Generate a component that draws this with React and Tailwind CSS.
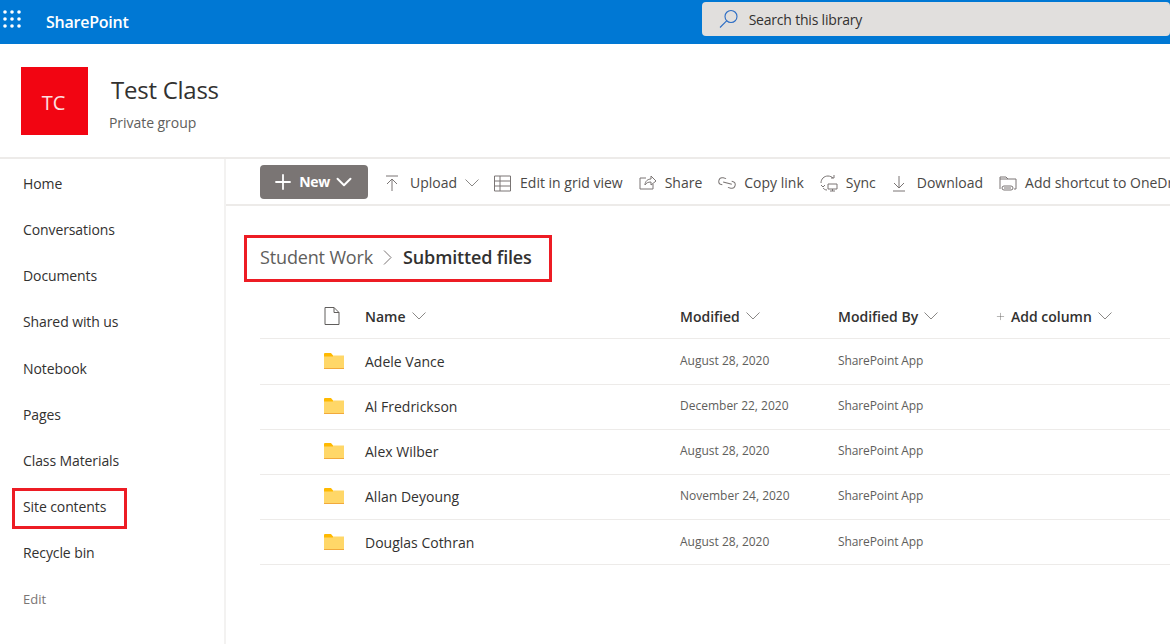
import React from "react";
import { ChevronDown, Plus } from "lucide-react";

const navItems = [
  "Home",
  "Conversations",
  "Documents",
  "Shared with us",
  "Notebook",
  "Pages",
  "Class Materials",
  "Site contents",
  "Recycle bin",
];

const rows = [
  { name: "Adele Vance", date: "August 28, 2020", cls: "h-[46px] pb-[1px]" },
  { name: "Al Fredrickson", date: "December 22, 2020", cls: "h-[45px] pb-[2px]" },
  { name: "Alex Wilber", date: "August 28, 2020", cls: "h-[45px] pb-[2px]" },
  { name: "Allan Deyoung", date: "November 24, 2020", cls: "h-[45px] pb-[2px]" },
  { name: "Douglas Cothran", date: "August 28, 2020", cls: "h-[45px]" },
];

const Waffle = () => (
  <svg width="18" height="18" viewBox="0 0 18 18" fill="#fff">
    {[2, 9, 16].map((y) =>
      [2, 9, 16].map((x) => <circle key={`${x}-${y}`} cx={x} cy={y} r="1.8" />)
    )}
  </svg>
);

const Icon = ({ children }) => (
  <svg width="20" height="20" viewBox="0 0 20 20" fill="none" stroke="#7a7574" strokeWidth="1" className="shrink-0">
    {children}
  </svg>
);

const Chev = ({ className = "" }) => (
  <svg width="14" height="8" viewBox="0 0 14 8" fill="none" stroke="#8a8886" strokeWidth="1" className={`shrink-0 ${className}`}>
    <path d="M.5.5 7 7l6.500-6.500" />
  </svg>
);

const Folder = () => (
  <svg width="20" height="16" viewBox="0 0 20 16">
    <path d="M0 2.500h20V16H0z" fill="#ffd768" />
    <path d="M0 1a1 1 0 0 1 1-1h6l2 2.500v1H0z" fill="#ffb900" />
    <path d="M0 15h20v1H0z" fill="#f2a93b" />
  </svg>
);

const Cmd = ({ icon, label, className = "" }) => (
  <div className={`flex shrink-0 items-center gap-[7px] text-[14px] text-[#4a4846] ${className}`}>
    {icon}
    <span>{label}</span>
  </div>
);

export default function App() {
  return (
    <div className="h-[644px] w-[1170px] overflow-hidden bg-white font-['Open_Sans',sans-serif] text-[#323130]">
      <div className="flex h-11 items-center bg-[#0078d4]">
        <div className="ml-[3px] mb-[6px]">
          <Waffle />
        </div>
        <span className="ml-[25px] text-[16px] font-semibold tracking-[-0.23px] text-white">SharePoint</span>
        <div className="ml-[573px] mb-[6px] flex h-[34px] flex-1 items-center rounded-sm bg-[#e1dfdd] pl-[17px]">
          <svg width="20" height="20" viewBox="0 0 20 20" fill="none" stroke="#2b6cc4" strokeWidth="1.1">
            <circle cx="12" cy="7.500" r="6" />
            <path d="M7.600 11.800 1 18.500" />
          </svg>
          <span className="ml-[10px] text-[14px] tracking-[-0.2px]">Search this library</span>
        </div>
      </div>

      <div className="flex h-[115px] items-center border-b-2 border-[#edebe9] pb-[2px] pl-[21px]">
        <div className="mt-[3px] flex h-[68px] w-[67px] items-center justify-center bg-[#f20512] pr-[2px] pt-[4px] text-[20px] text-[#fde0e0]">
          TC
        </div>
        <div className="ml-[21px] mt-[7px]">
          <div className="ml-[2px] text-[24px] font-medium leading-[32px] tracking-[-0.25px]">Test Class</div>
          <div className="mt-[7px] text-[14px] leading-[20px] tracking-[-0.05px] text-[#605e5c]">Private group</div>
        </div>
      </div>

      <div className="flex h-[485px]">
        <nav className="flex w-[226px] shrink-0 flex-col border-r-2 border-[#f3f2f1] pl-[23px] pt-[1.6px]">
          {navItems.map((item) => (
            <div key={item} className="relative flex h-[46.11px] items-center text-[14px] tracking-[-0.1px]">
              {item}
              {item === "Site contents" && (
                <div className="absolute left-[-11px] top-[4.2px] h-[41px] w-[115px] border-[3px] border-[#ed1c24]" />
              )}
            </div>
          ))}
          <div className="flex h-[46px] items-center pt-[2px] text-[13px] text-[#7a7574]">Edit</div>
        </nav>

        <main className="min-w-0 flex-1">
          <div className="flex h-[47px] items-center whitespace-nowrap border-b-2 border-[#edebe9] pl-[34px] pt-[2px]">
            <div className="mt-[-2px] flex h-[34px] w-[108px] shrink-0 items-center justify-center rounded-sm bg-[#7a7574] text-[14px] font-bold tracking-[-0.3px] text-white">
              <Plus size={24} strokeWidth={1.8} />
              <span className="ml-[4px]">New</span>
              <ChevronDown size={26} strokeWidth={1.8} className="ml-[1px]" />
            </div>
            <Cmd
              className="ml-[15px]"
              label="Upload"
              icon={
                <Icon>
                  <path d="M3 3h12M9 18V6M4 11l5-5 5 5" />
                </Icon>
              }
            />
            <Chev className="ml-[8px]" />
            <Cmd
              className="ml-[14px]"
              label="Edit in grid view"
              icon={
                <Icon>
                  <path d="M1.500 3h16v15h-16zM1.500 8h16M1.500 13h16M7 3v15" />
                </Icon>
              }
            />
            <Cmd
              className="ml-[15px]"
              label="Share"
              icon={
                <Icon>
                  <path d="M8 5H2v11h13v-5M7 12c0-4 3-6 6-6V3l5 5-5 4V9c-3 0-5 1-6 3z" />
                </Icon>
              }
            />
            <Cmd
              className="ml-[15px]"
              label="Copy link"
              icon={
                <Icon>
                  <path d="M8 6H5a3.500 3.500 0 0 0 0 7h1M6 10h9M12 14h3a3.500 3.500 0 0 0 0-7h-1" transform="rotate(15 10 10)" />
                </Icon>
              }
            />
            <Cmd
              className="ml-[15px]"
              label="Sync"
              icon={
                <Icon>
                  <path d="M2 10c0-4 3-7 7-7 2 0 4 1 5 2M15 2v3h-3M2 12l2 2 2-2M8 17c-2 0-3-1-4-2M9 11h9v5H9zM13.500 16v2M11 18h5" />
                </Icon>
              }
            />
            <Cmd
              className="ml-[14px]"
              label="Download"
              icon={
                <Icon>
                  <path d="M3 18h12M9 3v12M4 10l5 5 5-5" />
                </Icon>
              }
            />
            <Cmd
              className="ml-[15px]"
              label="Add shortcut to OneDrive"
              icon={
                <Icon>
                  <path d="M2 16V4h6l2 2h8v10h-2M2 6h8M6 13h7a2 2 0 0 1 0 4H6a2 2 0 0 1 0-4zM6 15h7" />
                </Icon>
              }
            />
          </div>

          <div className="relative mt-[29px] flex h-[47px] items-center whitespace-nowrap pb-[2px] pl-[34px]">
            <span className="text-[18px] tracking-[-0.15px] text-[#605e5c]">Student Work</span>
            <svg width="9" height="15" viewBox="0 0 9 15" fill="none" stroke="#7a7574" strokeWidth="1" className="ml-[10px] mr-[11px] shrink-0">
              <path d="M1 .500 8 7.500l-7 7" />
            </svg>
            <span className="text-[18px] font-semibold tracking-[-0.15px]">Submitted files</span>
            <div className="absolute left-[18px] top-0 h-[47px] w-[308px] border-[3px] border-[#ed1c24]" />
          </div>

          <div className="ml-[34px] mt-[12px]">
            <div className="flex h-[45px] items-center whitespace-nowrap border-b border-[#edebe9] text-[14px] font-semibold">
              <div className="flex w-[105px] justify-center pl-[38px]">
                <svg width="16" height="18" viewBox="0 0 16 18" fill="none" stroke="#605e5c" strokeWidth="1">
                  <path d="M1 .500h9l5 5v12H1zM10 .500v5h5" />
                </svg>
              </div>
              <div className="flex w-[315px] items-center gap-[6px]">
                Name
                <Chev />
              </div>
              <div className="flex w-[158px] items-center gap-[6px]">
                Modified
                <Chev />
              </div>
              <div className="flex w-[157px] items-center gap-[6px]">
                Modified By
                <Chev />
              </div>
              <div className="flex items-center gap-[5px]">
                <Plus size={11} strokeWidth={1} className="text-[#605e5c]" />
                Add column
                <Chev className="ml-[1px]" />
              </div>
            </div>
            {rows.map((row) => (
              <div key={row.name} className={`flex items-center whitespace-nowrap border-b border-[#edebe9] ${row.cls}`}>
                <div className="flex w-[105px] justify-center pl-[43px]">
                  <Folder />
                </div>
                <div className="w-[315px] text-[14px]">{row.name}</div>
                <div className="w-[158px] text-[12px] text-[#605e5c]">{row.date}</div>
                <div className="text-[12px] tracking-[-0.1px] text-[#605e5c]">SharePoint App</div>
              </div>
            ))}
          </div>
        </main>
      </div>
    </div>
  );
}
